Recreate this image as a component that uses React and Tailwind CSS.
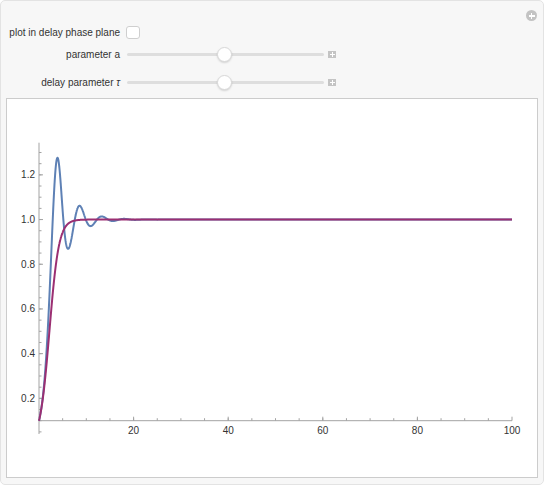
import { useMemo } from 'react';

// plot mapping (page coordinates)
const X0 = 39;
const Y0 = 420.7;
const SX = 4.73;
const SY = 223.5;
const px = (t) => X0 + t * SX;
const py = (v) => Y0 - (v - 0.1) * SY;

function simulate(a, tau, delayed) {
  const dt = 0.005;
  const n = Math.round(100 / dt);
  const lag = Math.round(tau / dt);
  const xs = new Float64Array(n + 1);
  xs[0] = 0.1;
  for (let i = 0; i < n; i++) {
    const xd = delayed ? (i - lag >= 0 ? xs[i - lag] : 0.1) : xs[i];
    xs[i + 1] = xs[i] + dt * a * xs[i] * (1 - xd);
  }
  let d = '';
  for (let i = 0; i <= n; i += i < 4000 ? 4 : 40) {
    d += (i === 0 ? 'M' : 'L') + px(i * dt).toFixed(2) + ' ' + py(xs[i]).toFixed(2);
  }
  return d;
}

function Slider() {
  return (
    <div className="flex items-center h-full">
      <div className="relative w-[197px] h-[3px] rounded-full bg-[#dedede]">
        <div className="absolute left-[90px] top-[-6px] w-[15px] h-[15px] rounded-full bg-white border border-[#d9d9d9] shadow-[0_1px_2px_rgba(0,0,0,0.15)]" />
      </div>
      <div className="relative ml-[4px] w-[8px] h-[7px] bg-[#c4c4c4]">
        <div className="absolute left-[1.5px] top-[3px] w-[5px] h-[1px] bg-white" />
        <div className="absolute left-[3.5px] top-[1px] w-[1px] h-[5px] bg-white" />
      </div>
    </div>
  );
}

function Plot() {
  const blue = useMemo(() => simulate(1, 1, true), []);
  const red = useMemo(() => simulate(1, 1, false), []);

  const yMajor = [0.2, 0.4, 0.6, 0.8, 1.0, 1.2];
  const yMinor = [];
  for (let v = 0.05; v < 1.34; v += 0.05) yMinor.push(+v.toFixed(2));
  const xMajor = [20, 40, 60, 80, 100];
  const xMinor = [];
  for (let t = 5; t < 100; t += 5) xMinor.push(t);

  return (
    <svg width="530" height="378" viewBox="7 99 530 378" className="block">
      <g stroke="#a3a3a3" strokeWidth="1" fill="none">
        <line x1={X0} y1="142.7" x2={X0} y2="434" />
        <line x1={X0} y1={Y0} x2="512" y2={Y0} />
        {yMinor.map((v) => (
          <line key={'ym' + v} x1={X0} y1={py(v)} x2={X0 + 2.5} y2={py(v)} />
        ))}
        {yMajor.map((v) => (
          <line key={'yM' + v} x1={X0} y1={py(v)} x2={X0 + 4} y2={py(v)} />
        ))}
        {xMinor.map((t) => (
          <line key={'xm' + t} x1={px(t)} y1={Y0} x2={px(t)} y2={Y0 - 2.5} />
        ))}
        {xMajor.map((t) => (
          <line key={'xM' + t} x1={px(t)} y1={Y0} x2={px(t)} y2={Y0 - 4} />
        ))}
      </g>
      <g fill="#333" fontSize="10" fontFamily="'Liberation Sans', Arial, sans-serif">
        {yMajor.map((v) => (
          <text key={'yl' + v} x="35" y={py(v) + 3.5} textAnchor="end">{v.toFixed(1)}</text>
        ))}
        {xMajor.map((t) => (
          <text key={'xl' + t} x={px(t)} y="434" textAnchor="middle">{t}</text>
        ))}
      </g>
      <path d={blue} fill="none" stroke="#5e81b5" strokeWidth="2" strokeLinejoin="round" />
      <path d={red} fill="none" stroke="#9b2f72" strokeWidth="2" strokeLinejoin="round" />
    </svg>
  );
}

export default function App() {
  return (
    <div className="w-[544px] h-[485px] bg-white font-['Liberation_Sans',Arial,sans-serif] text-[10px] text-[#333]">
      <div className="relative w-[544px] h-[485px] bg-[#f7f7f7] border border-[#e3e3e3] rounded-[5px] px-[5px] pt-[23px]">
        <div className="absolute right-[6px] top-[9px] w-[11px] h-[11px] rounded-full bg-[#c3c3c3]">
          <div className="absolute left-[2.5px] top-[5px] w-[6px] h-[1.5px] bg-white" />
          <div className="absolute left-[4.75px] top-[2.75px] w-[1.5px] h-[6px] bg-white" />
        </div>
        <div className="grid grid-cols-[114px_1fr] gap-x-[7px]">
          <div className="h-[16px] flex items-center justify-end whitespace-nowrap">plot in delay phase plane</div>
          <div className="h-[16px] flex items-center">
            <div className="w-[14px] h-[13px] rounded-[3px] bg-white border border-[#cfcfcf] ml-[-1px]" />
          </div>
          <div className="h-[28px] flex items-center justify-end whitespace-nowrap">parameter a</div>
          <div className="h-[28px]"><Slider /></div>
          <div className="h-[28px] flex items-center justify-end whitespace-nowrap">
            delay parameter&nbsp;<span className="italic">τ</span>
          </div>
          <div className="h-[28px]"><Slider /></div>
        </div>
        <div className="mt-[2px] w-[532px] h-[380px] bg-white border border-[#cccccc]">
          <Plot />
        </div>
      </div>
    </div>
  );
}
